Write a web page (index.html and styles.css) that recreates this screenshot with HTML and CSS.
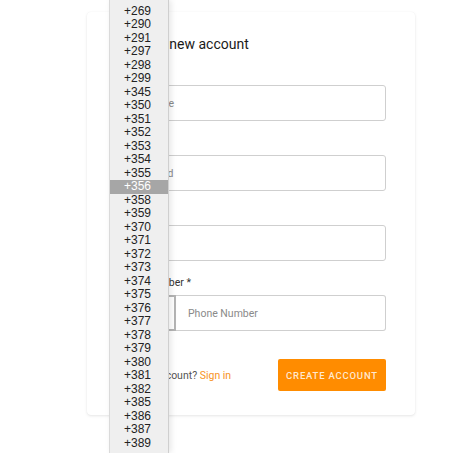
FILE: index.html
```html
<!DOCTYPE html>
<html lang="en">
<head>
<meta charset="utf-8">
<title>Create account</title>
<link rel="stylesheet" href="styles.css">
</head>
<body>
<div class="page">
  <div class="card">
    <h1 class="title">Create a new account</h1>
    <form class="form">
      <div class="field">
        <label class="label">Full Name *</label>
        <input class="input" type="text" placeholder="Full Name">
      </div>
      <div class="field">
        <label class="label">Password *</label>
        <input class="input" type="password" placeholder="Password">
      </div>
      <div class="field">
        <label class="label">Email *</label>
        <input class="input" type="text" placeholder="Email">
      </div>
      <div class="field">
        <label class="label">Phone Number *</label>
        <div class="phone">
          <div class="code">+356</div>
          <input class="input phone-input" type="text" placeholder="Phone Number">
        </div>
      </div>
      <div class="actions">
        <span class="signin">Have an account? <a class="link" href="#">Sign in</a></span>
        <button class="btn" type="button">Create account</button>
      </div>
    </form>
  </div>

  <div class="dropdown">
    <ul class="options">
      <li class="opt">+269</li>
      <li class="opt">+290</li>
      <li class="opt">+291</li>
      <li class="opt">+297</li>
      <li class="opt">+298</li>
      <li class="opt">+299</li>
      <li class="opt">+345</li>
      <li class="opt">+350</li>
      <li class="opt">+351</li>
      <li class="opt">+352</li>
      <li class="opt">+353</li>
      <li class="opt">+354</li>
      <li class="opt">+355</li>
      <li class="opt selected">+356</li>
      <li class="opt">+358</li>
      <li class="opt">+359</li>
      <li class="opt">+370</li>
      <li class="opt">+371</li>
      <li class="opt">+372</li>
      <li class="opt">+373</li>
      <li class="opt">+374</li>
      <li class="opt">+375</li>
      <li class="opt">+376</li>
      <li class="opt">+377</li>
      <li class="opt">+378</li>
      <li class="opt">+379</li>
      <li class="opt">+380</li>
      <li class="opt">+381</li>
      <li class="opt">+382</li>
      <li class="opt">+385</li>
      <li class="opt">+386</li>
      <li class="opt">+387</li>
      <li class="opt">+389</li>
    </ul>
  </div>
</div>
</body>
</html>
```

FILE: styles.css
```css
* { box-sizing: border-box; }

html, body {
  margin: 0;
  padding: 0;
  background: #ffffff;
}

body {
  font-family: Roboto, "Liberation Sans", Arial, sans-serif;
  color: #222;
}

.page {
  position: relative;
  width: 474px;
  height: 453px;
  overflow: hidden;
  padding: 12px 0 0 87px;
}

.card {
  width: 328px;
  background: #fff;
  border-radius: 4px;
  box-shadow: 0 1px 3px rgba(0, 0, 0, 0.10), 0 0 1px rgba(0, 0, 0, 0.06);
  padding: 20px 29px 24px 27px;
}

.title {
  margin: 0 0 9px 0;
  font-size: 14px;
  line-height: 24px;
  font-weight: 400;
  color: #1a1a1a;
}

.form {
  display: flex;
  flex-direction: column;
  gap: 14px;
  margin: 0;
}

.field {
  display: flex;
  flex-direction: column;
  gap: 4px;
}

.label {
  font-size: 10.5px;
  line-height: 16px;
  color: #333;
}

.input {
  height: 36px;
  width: 100%;
  border: 1px solid #cfcfcf;
  border-radius: 3px;
  padding: 0 12px;
  font-family: Roboto, "Liberation Sans", Arial, sans-serif;
  font-size: 10.5px;
  color: #333;
  background: #fff;
  outline: none;
}

.input::placeholder { color: #8a8a8a; }

.phone {
  display: flex;
  height: 36px;
}

.code {
  width: 62px;
  flex: none;
  border: 2px solid #b4b4b4;
  border-radius: 3px 0 0 3px;
  display: flex;
  align-items: center;
  padding-left: 10px;
  font-size: 10.5px;
  color: #333;
}

.phone-input {
  flex: 1;
  border-radius: 0 3px 3px 0;
  border-left: none;
}

.actions {
  display: flex;
  justify-content: space-between;
  align-items: center;
  margin-top: 14px;
}

.signin {
  font-size: 10.5px;
  color: #555;
}

.link {
  color: #f7931e;
  text-decoration: none;
}

.btn {
  width: 108px;
  height: 32px;
  border: none;
  border-radius: 2px;
  background: #ff8c00;
  color: rgba(255, 255, 255, 0.82);
  font-family: Roboto, "Liberation Sans", Arial, sans-serif;
  font-size: 9.5px;
  font-weight: 500;
  letter-spacing: 0.8px;
  text-transform: uppercase;
  padding: 0;
}

.dropdown {
  position: absolute;
  left: 109px;
  top: 0;
  width: 60px;
  height: 453px;
  background: #efefef;
  border-left: 1px solid #dadada;
  border-right: 1px solid #cfcfcf;
  box-shadow: 2px 0 6px rgba(0, 0, 0, 0.10);
  overflow: hidden;
}

.options {
  list-style: none;
  margin: 0;
  padding: 4.75px 0 0 0;
}

.opt {
  height: 13.5px;
  line-height: 13.5px;
  padding-left: 14px;
  font-family: "Liberation Sans", Arial, sans-serif;
  font-size: 12px;
  color: #222;
}

.opt.selected {
  background: #a6a6a6;
  color: #fff;
}
```
